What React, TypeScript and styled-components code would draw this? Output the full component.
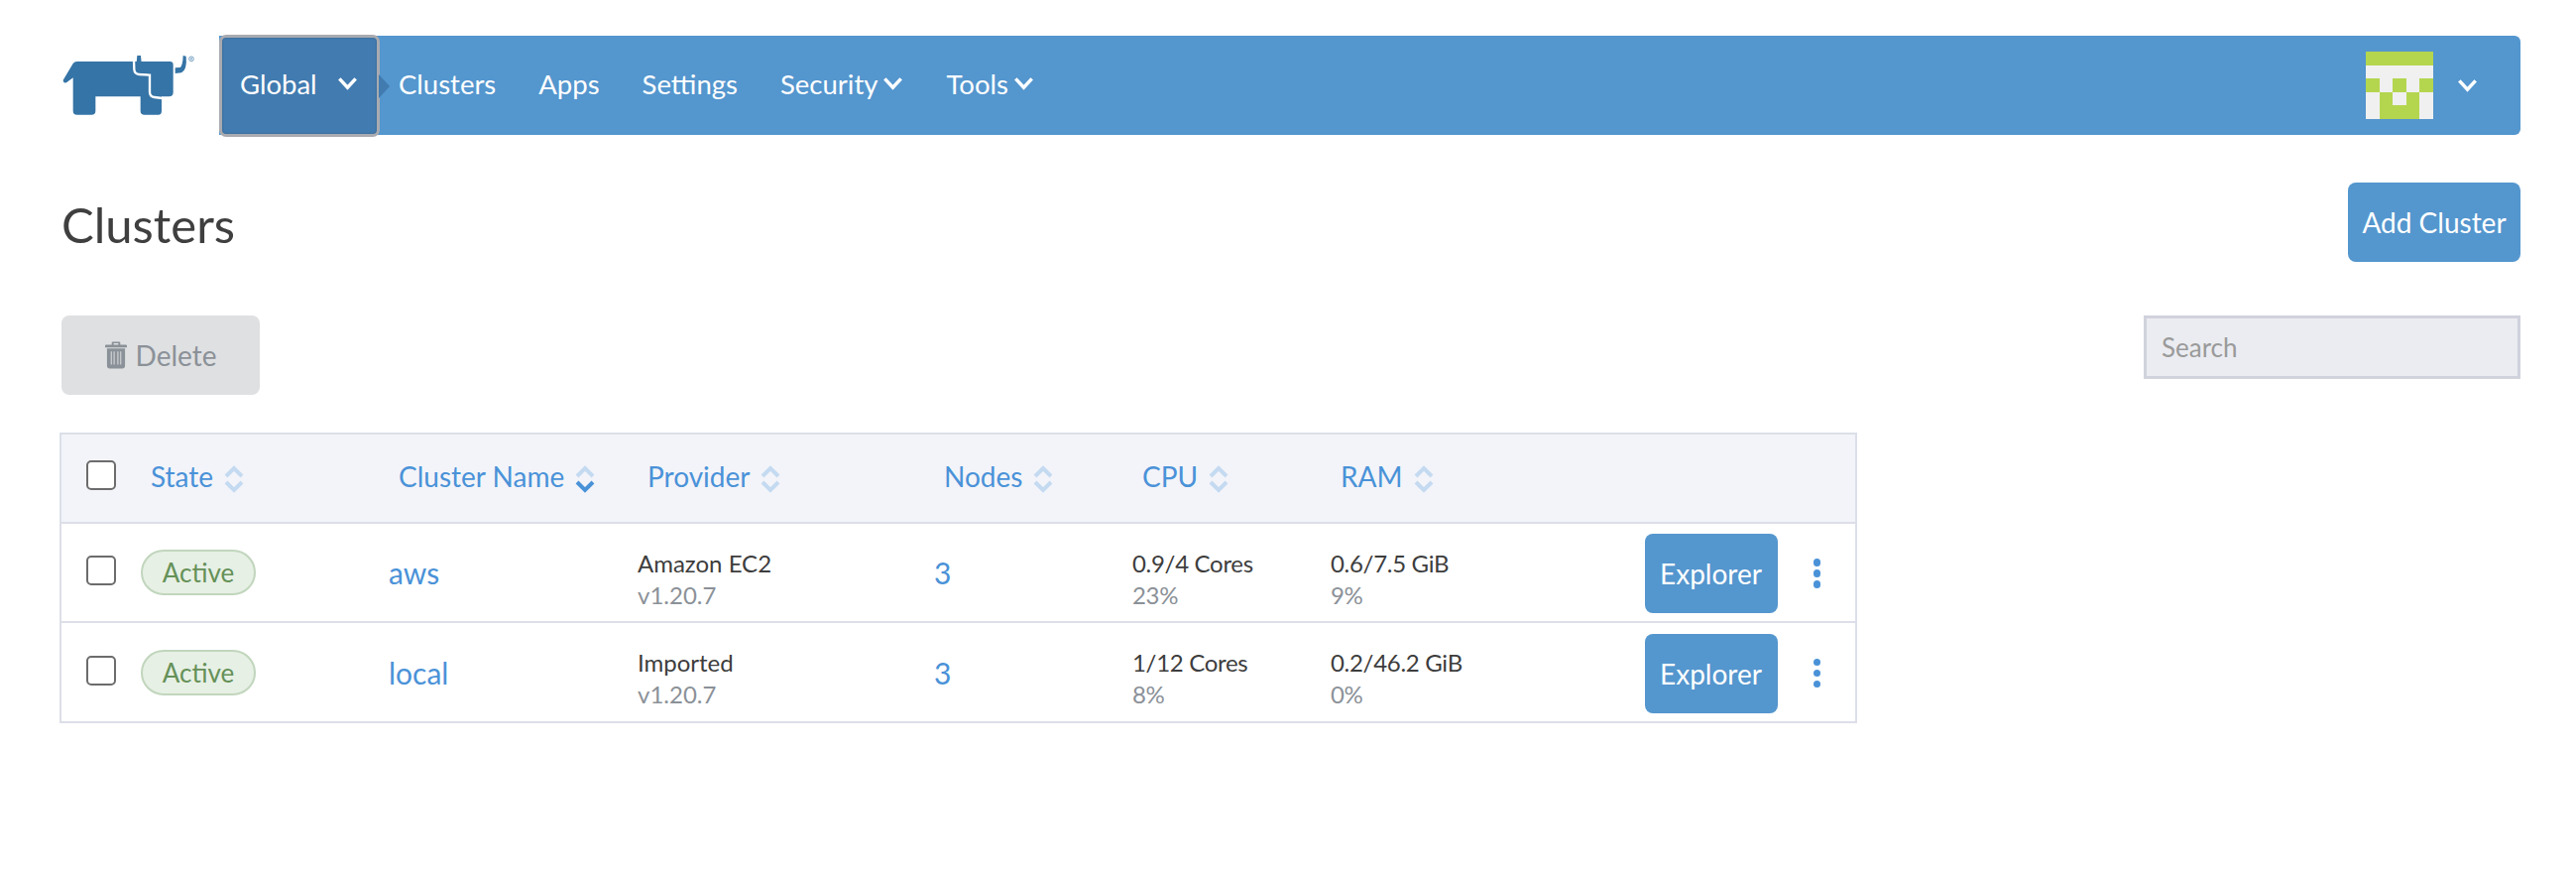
import React from 'react';
import styled, { createGlobalStyle } from 'styled-components';

const Global = createGlobalStyle`
  html, body { margin: 0; background: #fff; }
  body { font-family: Lato, "Liberation Sans", sans-serif; color: #3d3d3d; }
`;

const COLUMNS = '80px 250px 251px 299px 200px 200px 1fr auto';

const Page = styled.div`
  width: 2598px;
  box-sizing: border-box;
  padding: 36px 56px 0 60px;
`;
const Header = styled.header`
  display: flex;
  height: 100px;
`;
const LogoSlot = styled.div`
  width: 161px;
  flex: none;
  display: flex;
  align-items: center;
  padding-left: 3px;
  box-sizing: border-box;
`;
const NavBar = styled.nav`
  flex: 1;
  display: flex;
  align-items: center;
  background: #5496ce;
  border-radius: 0 6px 6px 0;
  color: #fff;
  font-size: 27.5px;
`;
const GlobalBox = styled.div`
  position: relative;
  box-sizing: border-box;
  width: 162px;
  height: 103px;
  margin: -1px 0 -2px;
  padding: 0 0 4px 18px;
  display: flex;
  align-items: center;
  gap: 20px;
  background: #417bb0;
  border: 3px solid #a9abb0;
  border-radius: 7px;
  box-shadow: inset 0 0 2px rgba(60, 70, 90, 0.6);
`;
const Arrow = styled.span`
  position: absolute;
  left: 158px;
  top: 37px;
  width: 0;
  height: 0;
  border-top: 12px solid transparent;
  border-bottom: 12px solid transparent;
  border-left: 11px solid #417bb0;
`;
const NavLinks = styled.div`
  display: flex;
  align-items: center;
  gap: 43px;
  margin-left: 19px;
  padding-bottom: 4px;
`;
const NavItem = styled.span`
  display: inline-flex;
  align-items: center;
  gap: 5px;
`;
const UserArea = styled.div`
  margin-left: auto;
  display: flex;
  align-items: center;
  gap: 24px;
  padding-right: 43px;
`;
const TitleRow = styled.div`
  display: flex;
  justify-content: space-between;
  align-items: center;
  height: 80px;
  margin-top: 48px;
`;
const Title = styled.h1`
  margin: 4px 0 0 2px;
  font-size: 49px;
  font-weight: 400;
  color: #3f3f3f;
`;
const Button = styled.button`
  box-sizing: border-box;
  height: 80px;
  border: 0;
  border-radius: 8px;
  background: #5496ce;
  color: #fff;
  font: 400 28px Lato, sans-serif;
  padding: 0 14px;
`;
const AddButton = styled(Button)`
  width: 174px;
  padding: 0;
`;
const Toolbar = styled.div`
  display: flex;
  justify-content: space-between;
  margin-top: 54px;
`;
const DeleteButton = styled(Button)`
  width: 200px;
  margin-left: 2px;
  background: #dfe0e2;
  color: #8b9198;
  display: flex;
  align-items: center;
  justify-content: center;
  gap: 9px;
`;
const Search = styled.input`
  box-sizing: border-box;
  width: 380px;
  height: 64px;
  padding: 0 15px;
  background: #ebecf1;
  border: 3px solid #d0d2dc;
  font: 400 26px Lato, sans-serif;
  &::placeholder { color: #9a9a9a; opacity: 1; }
`;
const Table = styled.div`
  width: 1813px;
  box-sizing: border-box;
  margin-top: 38px;
  border: 2px solid #dcdfe8;
`;
const HeadRow = styled.div`
  display: grid;
  grid-template-columns: ${COLUMNS};
  height: 88px;
  align-items: center;
  background: #f3f4f9;
  border-bottom: 2px solid #dcdfe8;
`;
const Row = styled.div<{ $last?: boolean }>`
  display: grid;
  grid-template-columns: ${COLUMNS};
  height: ${(p) => (p.$last ? 99 : 98)}px;
  align-items: center;
  border-bottom: ${(p) => (p.$last ? 'none' : '2px solid #dcdfe8')};
`;
const CheckCell = styled.div<{ $head?: boolean }>`
  padding-left: 25px;
  display: flex;
  margin-top: ${(p) => (p.$head ? -6 : -4)}px;
`;
const Check = styled.span`
  box-sizing: border-box;
  width: 30px;
  height: 30px;
  background: #fff;
  border: 2.5px solid #6c6c6c;
  border-radius: 5px;
`;
const HeadCell = styled.div`
  padding-left: 10px;
  display: flex;
  align-items: center;
  gap: 10px;
  color: #4a92d8;
  font-size: 28px;
  line-height: 34px;
`;
const HeadLabel = styled.span`
  margin-top: -5px;
`;
const SortSvg = styled.svg`
  margin-top: 2px;
  margin-left: 1px;
`;
const Badge = styled.span`
  box-sizing: border-box;
  display: inline-flex;
  align-items: center;
  justify-content: center;
  width: 116px;
  height: 46px;
  border: 2px solid #c1d6bd;
  border-radius: 23px;
  background: #e7f0e5;
  color: #659158;
  font-size: 26px;
`;
const LinkText = styled.a`
  color: #4a92d8;
  font-size: 30px;
`;
const Stack = styled.div<{ $tight?: boolean }>`
  display: flex;
  flex-direction: column;
  gap: 2px;
  margin-top: 13px;
  font-size: 24px;
  line-height: 30px;
  letter-spacing: ${(p) => (p.$tight ? '-0.3px' : '0')};
  color: #3d3d3d;
`;
const Muted = styled.span`
  color: #8b9198;
`;
const Actions = styled.div`
  display: flex;
  align-items: center;
  gap: 36px;
  padding-right: 35px;
  margin-top: 2px;
`;
const ExplorerButton = styled(Button)`
  width: 134px;
  padding: 0;
`;
const Kebab = styled.span`
  display: flex;
  flex-direction: column;
  gap: 3.5px;
`;
const Dot = styled.i`
  display: block;
  width: 7.5px;
  height: 7.5px;
  border-radius: 50%;
  background: #4a92d8;
`;

const Logo = () => (
  <svg width="134" height="60" viewBox="40 48 402 180" fill="#3574a6" aria-label="Rancher">
    <path d="M42 122 L72 72 Q76 66 84 66 L365 66 Q375 66 375 76 L375 160 Q375 172 362 172 L340 172 L340 215 Q340 227 330 227 L288 227 Q276 227 276 215 L276 172 L140 172 L140 215 Q140 227 128 227 L84 227 Q72 227 72 215 L72 115 L52 130 Q42 132 42 122 Z" />
    <path d="M256 60 L257 90 Q258 104 272 105 L304 107 L304 158 Q304 172 318 174 L342 177" fill="none" stroke="#fff" strokeWidth="7" />
    <path d="M266 48 L277 48 L279 70 Q281 80 292 82 L305 84 L305 103 L272 100 Q262 98 262 88 Z" />
    <path d="M381 85 L396 84 Q404 78 405 48 L414 50 Q418 90 400 100 L381 102 Z" />
    <circle cx="430" cy="58" r="7" fill="none" stroke="#3574a6" strokeWidth="2" />
    <circle cx="430" cy="58" r="2.5" />
  </svg>
);

const Chevron = ({ size = 21 }: { size?: number }) => (
  <svg width={size} height={size * 0.67} viewBox="0 0 18 12" fill="none" stroke="#fff" strokeWidth="3">
    <path d="M2 2 L9 9.5 L16 2" />
  </svg>
);

const SortIcon = ({ active }: { active?: boolean }) => (
  <SortSvg width="20" height="28" viewBox="0 0 20 28" fill="none" strokeWidth="4">
    <path d="M2 11 L10 3 L18 11" stroke="#c4daf1" />
    <path d="M2 17 L10 25 L18 17" stroke={active ? '#4a92d8' : '#c4daf1'} />
  </SortSvg>
);

const TrashIcon = () => (
  <svg width="22" height="28" viewBox="0 0 23 28" fill="#8b9198">
    <path d="M8 0 H15 Q16 0 16 1 V3 H22 Q23 3 23 4 V6 H0 V4 Q0 3 1 3 H7 V1 Q7 0 8 0 Z M9 1.5 V3 H14 V1.5 Z" fillRule="evenodd" />
    <path d="M2 7 H21 V25 Q21 28 18 28 H5 Q2 28 2 25 Z M6 10 V24 H7 V10 Z M9 10 V24 H10 V10 Z M13 10 V24 H14 V10 Z M16 10 V24 H17 V10 Z" fillRule="evenodd" />
  </svg>
);

const IDENTICON = ['GGGGG', 'WWWWW', 'GWGWG', 'WGWGW', 'WGGGW'];
const Avatar = () => (
  <svg width="68" height="68" viewBox="0 0 5 5" shapeRendering="crispEdges">
    {IDENTICON.flatMap((row, y) =>
      row.split('').map((c, x) => (
        <rect key={`${x}-${y}`} x={x} y={y} width="1" height="1" fill={c === 'G' ? '#b4d64f' : '#f0f0f0'} />
      )),
    )}
  </svg>
);

const HEADS: { label: string; active?: boolean }[] = [
  { label: 'State' },
  { label: 'Cluster Name', active: true },
  { label: 'Provider' },
  { label: 'Nodes' },
  { label: 'CPU' },
  { label: 'RAM' },
];

const CLUSTERS = [
  { name: 'aws', provider: 'Amazon EC2', cpu: '0.9/4 Cores', cpuPct: '23%', ram: '0.6/7.5 GiB', ramPct: '9%' },
  { name: 'local', provider: 'Imported', cpu: '1/12 Cores', cpuPct: '8%', ram: '0.2/46.2 GiB', ramPct: '0%' },
];

export default function App() {
  return (
    <Page>
      <Global />
      <Header>
        <LogoSlot>
          <Logo />
        </LogoSlot>
        <NavBar>
          <GlobalBox>
            Global <Chevron />
            <Arrow />
          </GlobalBox>
          <NavLinks>
            <NavItem>Clusters</NavItem>
            <NavItem>Apps</NavItem>
            <NavItem>Settings</NavItem>
            <NavItem>
              Security <Chevron />
            </NavItem>
            <NavItem>
              Tools <Chevron />
            </NavItem>
          </NavLinks>
          <UserArea>
            <Avatar />
            <Chevron />
          </UserArea>
        </NavBar>
      </Header>
      <TitleRow>
        <Title>Clusters</Title>
        <AddButton>Add Cluster</AddButton>
      </TitleRow>
      <Toolbar>
        <DeleteButton>
          <TrashIcon /> Delete
        </DeleteButton>
        <Search placeholder="Search" />
      </Toolbar>
      <Table>
        <HeadRow>
          <CheckCell $head>
            <Check />
          </CheckCell>
          {HEADS.map((h) => (
            <HeadCell key={h.label}>
              <HeadLabel>{h.label}</HeadLabel> <SortIcon active={h.active} />
            </HeadCell>
          ))}
        </HeadRow>
        {CLUSTERS.map((c, i) => (
          <Row key={c.name} $last={i === CLUSTERS.length - 1}>
            <CheckCell>
              <Check />
            </CheckCell>
            <div>
              <Badge>Active</Badge>
            </div>
            <div>
              <LinkText>{c.name}</LinkText>
            </div>
            <Stack>
              <span>{c.provider}</span>
              <Muted>v1.20.7</Muted>
            </Stack>
            <div>
              <LinkText>3</LinkText>
            </div>
            <Stack $tight>
              <span>{c.cpu}</span>
              <Muted>{c.cpuPct}</Muted>
            </Stack>
            <Stack $tight>
              <span>{c.ram}</span>
              <Muted>{c.ramPct}</Muted>
            </Stack>
            <Actions>
              <ExplorerButton>Explorer</ExplorerButton>
              <Kebab>
                <Dot />
                <Dot />
                <Dot />
              </Kebab>
            </Actions>
          </Row>
        ))}
      </Table>
    </Page>
  );
}
